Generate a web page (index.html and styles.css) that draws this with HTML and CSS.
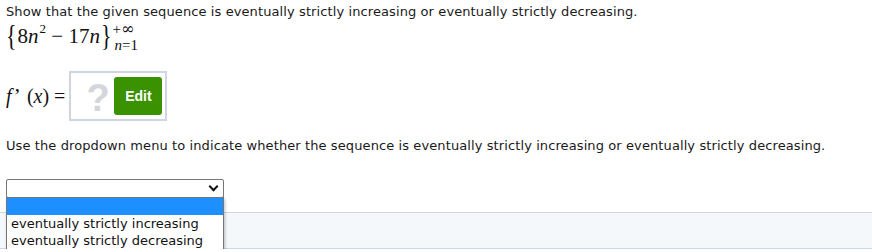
FILE: index.html
```html
<!DOCTYPE html>
<html lang="en">
<head>
    <meta charset="UTF-8">
    <title>Sequence question</title>
    <link rel="stylesheet" href="styles.css">
</head>
<body>
    <div class="question">
        <p class="prompt">Show that the given sequence is eventually strictly increasing or eventually strictly decreasing.</p>
        <div class="math seq">
            <span class="brace">{</span><span class="expr">8<i>n</i><sup>2</sup> &minus; 17<i>n</i></span><span class="brace">}</span><span class="limits"><span class="up">+<span class="inf">&infin;</span></span><span class="down"><i>n</i>=1</span></span>
        </div>

        <div class="answer-row">
            <span class="math fx"><i>f</i><span class="prime">&#8217;</span> (<i>x</i>) =</span>
            <div class="answer-box">
                <span class="qmark">?</span>
                <button class="edit">Edit</button>
            </div>
        </div>

        <p class="prompt use">Use the dropdown menu to indicate whether the sequence is eventually strictly increasing or eventually strictly decreasing.</p>

        <div class="select-wrap">
            <div class="select"><span class="chev"></span></div>
            <ul class="options">
                <li class="active">&nbsp;</li>
                <li>eventually strictly increasing</li>
                <li>eventually strictly decreasing</li>
            </ul>
        </div>
        <div class="band"></div>
    </div>
</body>
</html>
```

FILE: styles.css
```css
body {
    margin: 0;
    background: #fff;
    color: #1a1a1a;
    font-family: Verdana, "DejaVu Sans", sans-serif;
    font-size: 13px;
}

.question {
    padding: 4px 6px 0 6px;
}

.prompt {
    margin: 0;
    line-height: 16px;
    letter-spacing: 0.1px;
}

.math {
    font-family: "Liberation Serif", serif;
    color: #111;
}

.math i {
    font-style: italic;
}

.seq {
    display: flex;
    align-items: center;
    font-size: 21px;
    height: 30px;
}

.expr {
    margin: 0 1px;
}

.seq sup {
    font-size: 13px;
    vertical-align: 10px;
    margin-left: 1px;
}

.brace {
    font-size: 22px;
    line-height: 20px;
    display: inline-block;
    transform: scaleY(1.3);
    position: relative;
    top: 1px;
}

.limits {
    display: flex;
    flex-direction: column;
    font-size: 15px;
    line-height: 12px;
    margin-left: 1px;
}

.inf {
    font-family: "DejaVu Serif", serif;
    font-size: 16px;
}

.limits .up {
    position: relative;
    top: 0;
}

.limits .down {
    position: relative;
    top: 4px;
    margin-left: 2px;
}

.answer-row {
    display: flex;
    align-items: center;
    margin-top: 21px;
    height: 50px;
}

.fx {
    font-size: 20px;
    margin-right: 4px;
}

.prime {
    font-size: 22px;
    margin: 0 1px 0 2px;
}

.answer-box {
    display: flex;
    align-items: center;
    box-sizing: border-box;
    width: 98px;
    height: 50px;
    border: 2px solid #cfd6df;
    padding: 0 0 0 15px;
}

.qmark {
    font-family: Arial, "Liberation Sans", sans-serif;
    font-weight: bold;
    font-size: 38px;
    color: #d3d7dc;
    width: 28px;
    margin-top: 4px;
}

.edit {
    width: 48px;
    height: 38px;
    border: none;
    border-radius: 3px;
    background: #3a9200;
    color: #fff;
    font-family: Arial, "Liberation Sans", sans-serif;
    font-weight: bold;
    font-size: 14px;
    padding: 0;
}

.use {
    margin-top: 17px;
}

.select-wrap {
    position: relative;
    margin-top: 25px;
    width: 218px;
    z-index: 2;
}

.select {
    box-sizing: border-box;
    height: 19px;
    border: 1px solid #767676;
    border-radius: 2px;
    background: #fff;
    position: relative;
}

.chev {
    position: absolute;
    right: 6px;
    top: 3px;
    width: 5px;
    height: 5px;
    border-right: 2px solid #111;
    border-bottom: 2px solid #111;
    transform: rotate(45deg);
}

.options {
    position: absolute;
    left: 0;
    top: 18px;
    box-sizing: border-box;
    width: 218px;
    margin: 0;
    padding: 0;
    list-style: none;
    background: #fff;
    border: 1px solid #767676;
    box-shadow: 1px 2px 3px rgba(0,0,0,0.25);
}

.options li {
    height: 17px;
    line-height: 17px;
    padding-left: 4px;
    color: #111;
}

.options li.active {
    background: #1e8fff;
}

.band {
    margin: 14px -6px 0 -6px;
    height: 35px;
    background: #f5f8fb;
    border-top: 1px solid #cfd6e1;
    border-bottom: 1px solid #cfd6e1;
}
```
